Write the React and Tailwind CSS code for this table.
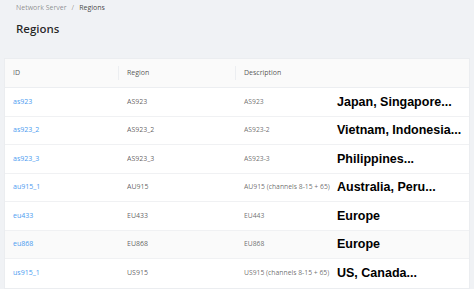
const regions = [
  { id: "as923", region: "AS923", desc: "AS923", note: "Japan, Singapore..." },
  { id: "as923_2", region: "AS923_2", desc: "AS923-2", note: "Vietnam, Indonesia..." },
  { id: "as923_3", region: "AS923_3", desc: "AS923-3", note: "Philippines..." },
  { id: "au915_1", region: "AU915", desc: "AU915 (channels 8-15 + 65)", note: "Australia, Peru..." },
  { id: "eu433", region: "EU433", desc: "EU443", note: "Europe" },
  { id: "eu868", region: "EU868", desc: "EU868", note: "Europe", hover: true },
  { id: "us915_1", region: "US915", desc: "US915 (channels 8-15 + 65)", note: "US, Canada..." },
];

export default function App() {
  return (
    <div
      className="w-full h-[289px] overflow-hidden bg-[#f0f2f5]"
      style={{ fontFamily: '"Open Sans", "Noto Sans", sans-serif' }}
    >
      <div className="h-[58px] px-4 pt-[2px]">
        <div className="flex items-center gap-[5px] h-[13px] text-[7px] text-[rgba(0,0,0,0.45)]">
          <span>Network Server</span>
          <span>/</span>
          <span className="text-[rgba(0,0,0,0.75)]">Regions</span>
        </div>
        <h1 className="mt-[7px] text-[11.5px] font-semibold leading-[14px] text-[rgba(0,0,0,0.85)]">
          Regions
        </h1>
      </div>

      <div className="mx-[4px] bg-white border border-[#ebedf0] text-[7px]">
        <div className="grid grid-cols-[114px_117px_1fr] h-[29px] items-center bg-[#fafafa] border-b border-[#eceef1] text-[rgba(0,0,0,0.7)]">
          <div className="px-[8px] border-r border-[#eceef1] h-[14px] flex items-center">ID</div>
          <div className="px-[8px] border-r border-[#eceef1] h-[14px] flex items-center">Region</div>
          <div className="px-[8px]">Description</div>
        </div>

        {regions.map((r) => (
          <div
            key={r.id}
            className={`grid grid-cols-[114px_117px_1fr] h-[28.5px] items-center border-b border-[#f0f1f3] last:border-b-0 ${
              r.hover ? "bg-[#fafafa]" : "bg-white"
            }`}
          >
            <div className="px-[8px] text-[#4b9bf0]">{r.id}</div>
            <div className="px-[8px] text-[rgba(0,0,0,0.65)]">{r.region}</div>
            <div className="px-[8px] flex items-center text-[rgba(0,0,0,0.6)]">
              <span className="w-[93px] shrink-0 whitespace-nowrap text-[6.8px]">{r.desc}</span>
              <span
                className="text-[12.5px] font-bold text-black whitespace-nowrap leading-none"
                style={{ fontFamily: '"Liberation Sans", Arial, sans-serif' }}
              >
                {r.note}
              </span>
            </div>
          </div>
        ))}
      </div>
    </div>
  );
}
